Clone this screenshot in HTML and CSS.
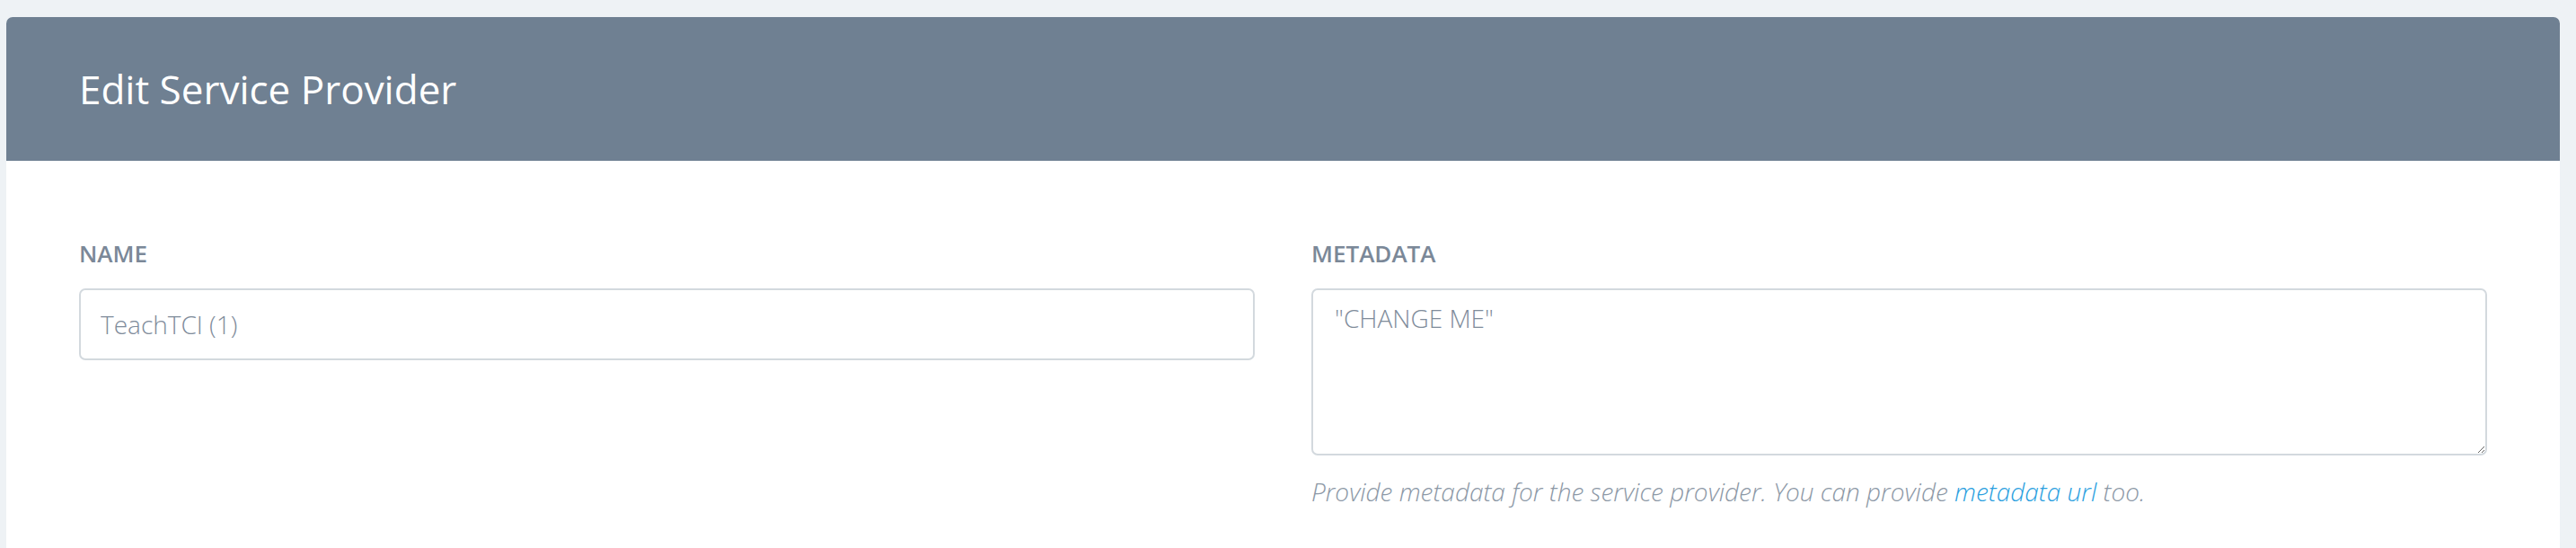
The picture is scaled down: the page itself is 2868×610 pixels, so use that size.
FILE: index.html
```html
<!DOCTYPE html>
<html lang="en">
<head>
<meta charset="utf-8">
<title>Edit Service Provider</title>
<link rel="stylesheet" href="styles.css">
</head>
<body>
<div class="card">
  <div class="card-header">
    <h1 class="card-title">Edit Service Provider</h1>
  </div>
  <div class="card-body">
    <div class="field">
      <label class="field-label" for="name">NAME</label>
      <input class="text-input" id="name" type="text" value="TeachTCI (1)">
    </div>
    <div class="field">
      <label class="field-label" for="metadata">METADATA</label>
      <textarea class="text-area" id="metadata">"CHANGE ME"</textarea>
      <p class="help">Provide metadata for the service provider. You can provide <a href="#" class="help-link">metadata url</a> too.</p>
    </div>
  </div>
</div>
</body>
</html>
```

FILE: styles.css
```css
html, body {
  margin: 0;
  padding: 0;
  background: #eef2f5;
  font-family: "Open Sans", "Liberation Sans", sans-serif;
}

.card {
  margin: 19px 18px 0 7px;
  min-height: calc(100vh - 19px);
  background: #ffffff;
  border-radius: 7px 7px 0 0;
  overflow: hidden;
}

.card-header {
  height: 160px;
  background: #6f8092;
  display: flex;
  align-items: center;
  padding: 0 81px;
}

.card-title {
  margin: 0;
  font-size: 44px;
  font-weight: 400;
  color: #ffffff;
  line-height: 1.2;
}

.card-body {
  display: grid;
  grid-template-columns: 1fr 1fr;
  column-gap: 63px;
  padding: 87px 81px 40px;
}

.field {
  display: flex;
  flex-direction: column;
  align-items: stretch;
}

.field-label {
  font-size: 26px;
  line-height: 33px;
  font-weight: 600;
  color: #7b8898;
  margin-bottom: 22px;
}

.text-input,
.text-area {
  font-family: "Open Sans", "Liberation Sans", sans-serif;
  font-size: 28px;
  font-weight: 300;
  color: #7f8c9b;
  border: 2px solid #d3d9de;
  border-radius: 7px;
  background: #ffffff;
  box-sizing: border-box;
  outline: none;
  margin: 0;
}

.text-input {
  height: 80px;
  padding: 0 22px;
}

.text-area {
  height: 186px;
  padding: 12px 24px;
  line-height: 38px;
  resize: vertical;
}

.help {
  margin: 22px 0 0;
  font-size: 28px;
  font-weight: 300;
  font-style: italic;
  color: #8c98a6;
  line-height: 36px;
}

.help-link {
  color: #2b9fe0;
  text-decoration: none;
}
```
